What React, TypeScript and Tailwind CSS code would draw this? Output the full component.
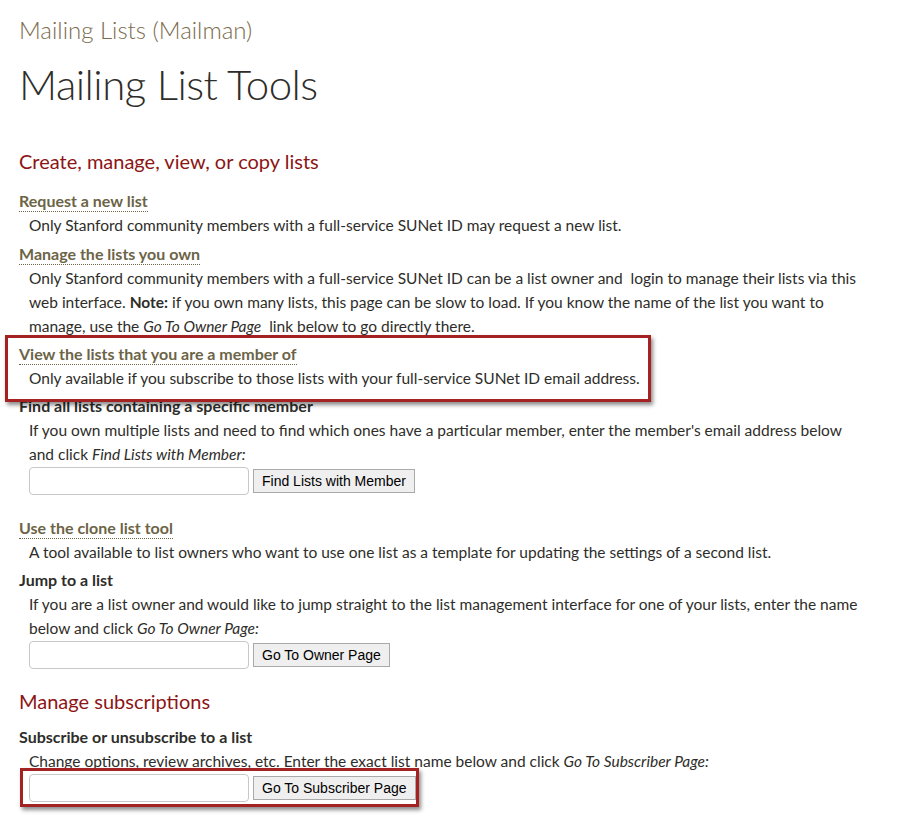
import React from 'react';

const font = { fontFamily: 'Lato, "Noto Sans", sans-serif' };

function Term({ children, link = true }: { children: React.ReactNode; link?: boolean }) {
  return (
    <dt className="h-6 leading-6 text-[16px] font-bold">
      {link ? (
        <a className="text-[#6c6446] border-b border-dotted border-[#6c6446] pb-[1px]">{children}</a>
      ) : (
        <span className="text-[#2e2d29]">{children}</span>
      )}
    </dt>
  );
}

function Desc({ children }: { children: React.ReactNode }) {
  return <dd className="ml-[10px] mr-[23px] text-[15.5px] leading-6 text-[#2e2d29]">{children}</dd>;
}

function InputRow({ label }: { label: string }) {
  return (
    <div className="ml-[10px] mt-[1px] flex items-center gap-1 h-7">
      <input className="w-[220px] h-7 border border-[#c8c8c8] rounded-[4px] bg-white" type="text" />
      <button
        className="h-6 px-[8px] border border-[#a9a9a9] bg-[#efefef] text-[14px] text-black"
        style={{ fontFamily: '"Liberation Sans", Arial, sans-serif' }}
      >
        {label}
      </button>
    </div>
  );
}

export default function App() {
  return (
    <div className="relative bg-white min-h-[821px] px-[19px] pt-[14px]" style={font}>
      <div className="text-[24px] leading-8 font-light text-[#7b6b4d]">Mailing Lists (Mailman)</div>
      <h1 className="mt-[10px] text-[42px] leading-[56px] font-light text-[#2e2d29] tracking-[-0.5px]">Mailing List Tools</h1>

      <h2 className="mt-[35px] text-[20px] leading-7 text-[#8c1515]">Create, manage, view, or copy lists</h2>

      <dl className="mt-[14px]">
        <Term>Request a new list</Term>
        <Desc>Only Stanford community members with a full-service SUNet ID may request a new list.</Desc>
        <div className="h-[5px]" />
        <Term>Manage the lists you own</Term>
        <Desc>
          Only Stanford community members with a full-service SUNet ID can be a list owner and&nbsp; login to manage their lists via this web interface. <b>Note:</b> if you own many lists, this page can be slow to load. If you know the name of the list you want to manage, use the <i>Go To Owner Page</i>&nbsp; link below to go directly there.
        </Desc>
        <div className="h-[4px]" />
        <Term>View the lists that you are a member of</Term>
        <Desc>Only available if you subscribe to those lists with your full-service SUNet ID email address.</Desc>
        <div className="h-[4px]" />
        <Term link={false}>Find all lists containing a specific member</Term>
        <Desc>
          If you own multiple lists and need to find which ones have a particular member, enter the member's email address below and click <i>Find Lists with Member:</i>
        </Desc>
        <InputRow label="Find Lists with Member" />
        <div className="h-[21px]" />
        <Term>Use the clone list tool</Term>
        <Desc>A tool available to list owners who want to use one list as a template for updating the settings of a second list.</Desc>
        <div className="h-[4px]" />
        <Term link={false}>Jump to a list</Term>
        <Desc>
          If you are a list owner and would like to jump straight to the list management interface for one of your lists, enter the name below and click <i>Go To Owner Page:</i>
        </Desc>
        <InputRow label="Go To Owner Page" />
      </dl>

      <h2 className="mt-[18px] text-[20px] leading-7 text-[#8c1515]">Manage subscriptions</h2>

      <dl className="mt-[10px]">
        <Term link={false}>Subscribe or unsubscribe to a list</Term>
        <Desc>
          Change options, review archives, etc. Enter the exact list name below and click <i>Go To Subscriber Page:</i>
        </Desc>
        <InputRow label="Go To Subscriber Page" />
      </dl>

      {/* annotation boxes */}
      <div className="absolute left-[5px] top-[335px] w-[646px] h-[67px] border-[3px] border-[#a52222] shadow-[2px_3px_4px_rgba(0,0,0,0.45)] pointer-events-none" />
      <div className="absolute left-[20px] top-[768px] w-[399px] h-[39px] border-[3px] border-[#a52222] shadow-[2px_3px_4px_rgba(0,0,0,0.45)] pointer-events-none" />
    </div>
  );
}
